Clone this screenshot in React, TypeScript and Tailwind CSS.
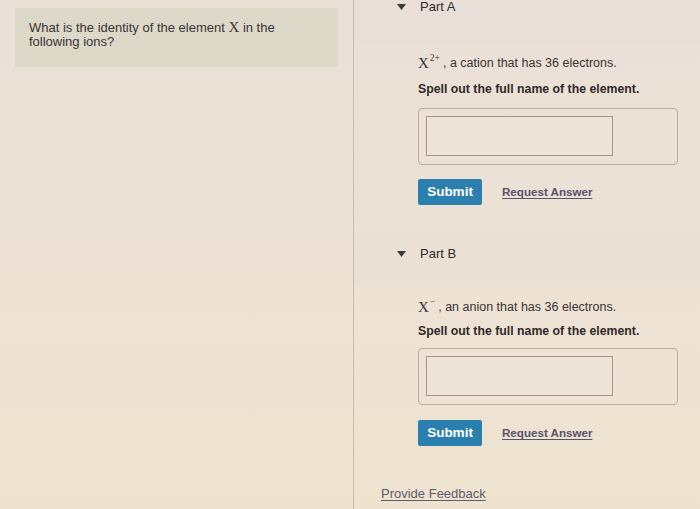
import React from 'react';

const sans = "font-['Liberation_Sans',Arial,sans-serif]";
const serif = "font-['Liberation_Serif','Times_New_Roman',serif]";

const Caret = () => (
    <svg width="9" height="6" viewBox="0 0 9 6" className="shrink-0">
        <path d="M0 0h9L4.5 6z" fill="#3d3a3a" />
    </svg>
);

interface PartProps {
    label: string;
    charge: string;
    desc: string;
    top: boolean;
}

const Part: React.FC<PartProps> = ({ label, charge, desc, top }) => (
    <div className="flex flex-col">
        {top ? (
            <div className="h-[42px] flex items-start gap-[14px] pl-[43px] bg-[#e8ddd7]/50">
                <span className="mt-[4px]"><Caret /></span>
                <span className="text-[13px] leading-[14px] text-[#2f2b2b]">{label}</span>
            </div>
        ) : (
            <div className="h-[54px] flex items-start gap-[14px] pl-[43px] pt-[15px] bg-[#e8ddd3]/50">
                <span className="mt-[4px]"><Caret /></span>
                <span className="text-[13px] leading-[14px] text-[#2f2b2b]">{label}</span>
            </div>
        )}
        <div className="pl-[64px] pr-[22px]">
            <p className="mt-[13px] h-[16px] flex items-center text-[12.5px] text-[#3a3432] leading-[16px]">
                <span className={`${serif} text-[15px]`}>X</span>
                <span className={`${serif} text-[9.5px] relative -top-[5px] ml-[1px] mr-[3px]`}>{charge}</span>
                <span>, {desc}</span>
            </p>
            <p className={`${top ? 'mt-[10px]' : 'mt-[8px]'} text-[12.3px] font-bold text-[#2f2a29] leading-[16px]`}>Spell out the full name of the element.</p>
            <div className={`${top ? 'mt-[11px]' : 'mt-[9px]'} w-[260px] h-[57px] rounded-[4px] border border-[#bbac9c] p-[7px]`}>
                <div className="w-[187px] h-[40px] border border-[#a89684] bg-[#ede3d8]" />
            </div>
            <div className={`${top ? 'mt-[14px]' : 'mt-[15px]'} flex items-center gap-[20px]`}>
                <button className="w-[64px] h-[26px] rounded-[2px] bg-[#2b7fae] text-white text-[13.5px] font-bold">Submit</button>
                <a className="text-[11.6px] font-bold text-[#57536b] underline underline-offset-2">Request Answer</a>
            </div>
        </div>
    </div>
);

export default function App() {
    return (
        <div className={`w-[700px] h-[509px] overflow-hidden flex bg-gradient-to-b from-[#eae0d8] via-[#ede2d5] to-[#efe3d0] ${sans}`}>
            <div className="w-[354px] shrink-0 border-r border-[#c9bcae] pt-[8px] pl-[15px] pr-[15px]">
                <div className="h-[59px] bg-[#dcd9c9] pl-[14px] pt-[12px] text-[13px] leading-[14px] text-[#3a3536]">
                    <p>
                        What is the identity of the element <span className={`${serif} text-[15px]`}>X</span> in the
                        <br />following ions?
                    </p>
                </div>
            </div>
            <div className="flex-1 flex flex-col">
                <Part label="Part A" charge="2+" desc="a cation that has 36 electrons." top={true} />
                <div className="h-[27px]" />
                <Part label="Part B" charge="−" desc="an anion that has 36 electrons." top={false} />
                <a className="mt-[40px] ml-[27px] text-[13px] leading-[16px] text-[#5b5e6e] underline underline-offset-2">Provide Feedback</a>
            </div>
        </div>
    );
}
